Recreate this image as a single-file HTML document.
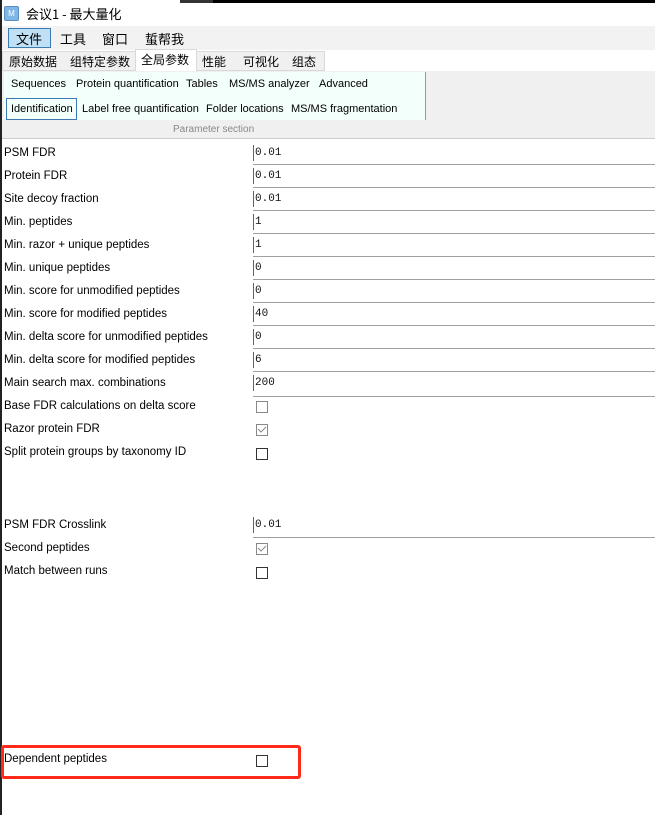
<!DOCTYPE html>
<html><head><meta charset="utf-8"><style>
*{margin:0;padding:0;box-sizing:border-box}
body{width:655px;height:815px;position:relative;background:#fff;font-family:"Liberation Sans","Noto Sans CJK SC",sans-serif;font-size:11px;color:#000;overflow:hidden}
.a{position:absolute;white-space:nowrap}
.cn{font-family:"Noto Sans CJK SC","Liberation Sans",sans-serif;font-size:13px}
.tb{font-family:"Noto Sans CJK SC","Liberation Sans",sans-serif;font-size:12px}
.lbl{position:absolute;left:4px;font-size:11.5px}
.fld{position:absolute;left:253px;width:402px;height:22px;border-top:1px solid #a0a0a0;font-family:"Liberation Mono",monospace;font-size:11px;padding:5px 0 0 2px;color:#111}
.fld:before{content:"";position:absolute;left:0;top:3px;width:1px;height:16px;background:#7a4a9a}
.cb{position:absolute;left:256px;width:12px;height:12px;border:1px solid #333;background:#fff}
.cb.g{border-color:#888}
</style></head><body>
<div class="a" style="left:180px;top:0;width:33px;height:3px;background:#333"></div>
<div class="a" style="left:213px;top:0;width:442px;height:3px;background:#000"></div>
<div class="a" style="left:4px;top:6px;width:15px;height:15px;background:#7fb6e6;border:1px solid #5a8fc4;border-radius:2px;color:#fff;font-size:8px;line-height:13px;text-align:center">M</div>
<div class="a cn" style="left:26px;top:4px">会议1 - 最大量化</div>
<div class="a" style="left:0;top:26px;width:655px;height:24px;background:#f2f2f2"></div>
<div class="a" style="left:8px;top:28px;width:43px;height:20px;background:#bfe0f5;border:1px solid #3d7ab4"></div>
<div class="a cn" style="left:16px;top:29px">文件</div>
<div class="a cn" style="left:60px;top:29px">工具</div>
<div class="a cn" style="left:102px;top:29px">窗口</div>
<div class="a cn" style="left:145px;top:29px">蜇帮我</div>
<div class="a" style="left:2px;top:51px;width:323px;height:20px;background:#f0f0f0;border:1px solid #d9d9d9"></div>
<div class="a" style="left:135px;top:49px;width:62px;height:23px;background:#fff;border:1px solid #d9d9d9;border-bottom:none"></div>
<div class="a tb" style="left:9px;top:53px">原始数据</div>
<div class="a tb" style="left:70px;top:53px">组特定参数</div>
<div class="a tb" style="left:141px;top:51px">全局参数</div>
<div class="a tb" style="left:202px;top:53px">性能</div>
<div class="a tb" style="left:243px;top:53px">可视化</div>
<div class="a tb" style="left:292px;top:53px">组态</div>
<div class="a" style="left:2px;top:71px;width:653px;height:68px;background:#f0f0f0;border-bottom:1px solid #ccc"></div>
<div class="a" style="left:4px;top:72px;width:422px;height:48px;background:#f3fffb;border-right:1px solid #999"></div>
<div class="a" style="left:11px;top:78px">Sequences</div>
<div class="a" style="left:76px;top:78px">Protein quantification</div>
<div class="a" style="left:186px;top:78px">Tables</div>
<div class="a" style="left:229px;top:78px">MS/MS analyzer</div>
<div class="a" style="left:319px;top:78px">Advanced</div>
<div class="a" style="left:6px;top:98px;width:71px;height:22px;border:1px solid #3d7ab4"></div>
<div class="a" style="left:11px;top:103px">Identification</div>
<div class="a" style="left:82px;top:103px">Label free quantification</div>
<div class="a" style="left:206px;top:103px">Folder locations</div>
<div class="a" style="left:291px;top:103px">MS/MS fragmentation</div>
<div class="a" style="left:173px;top:124px;font-size:10px;color:#888">Parameter section</div>
<div class="a" style="left:0;top:0;width:2px;height:815px;background:#222"></div>

<div class="lbl" style="top:147px">PSM FDR</div><div class="fld" style="top:141px;border-top-color:transparent">0.01</div>
<div class="lbl" style="top:170px">Protein FDR</div><div class="fld" style="top:164px">0.01</div>
<div class="lbl" style="top:193px">Site decoy fraction</div><div class="fld" style="top:187px">0.01</div>
<div class="lbl" style="top:216px">Min. peptides</div><div class="fld" style="top:210px">1</div>
<div class="lbl" style="top:239px">Min. razor + unique peptides</div><div class="fld" style="top:233px">1</div>
<div class="lbl" style="top:262px">Min. unique peptides</div><div class="fld" style="top:256px">0</div>
<div class="lbl" style="top:285px">Min. score for unmodified peptides</div><div class="fld" style="top:279px">0</div>
<div class="lbl" style="top:308px">Min. score for modified peptides</div><div class="fld" style="top:302px">40</div>
<div class="lbl" style="top:331px">Min. delta score for unmodified peptides</div><div class="fld" style="top:325px">0</div>
<div class="lbl" style="top:354px">Min. delta score for modified peptides</div><div class="fld" style="top:348px">6</div>
<div class="lbl" style="top:377px">Main search max. combinations</div><div class="fld" style="top:371px">200</div>
<div class="a" style="left:253px;top:396px;width:402px;height:1px;background:#a0a0a0"></div>
<div class="lbl" style="top:400px">Base FDR calculations on delta score</div><div class="cb g" style="top:401px"></div>
<div class="lbl" style="top:423px">Razor protein FDR</div><div class="cb g" style="top:424px"><svg width="10" height="10" style="position:absolute;left:0;top:0"><path d="M1 4 L4 7 L9 2" stroke="#888" fill="none"/></svg></div>
<div class="lbl" style="top:446px">Split protein groups by taxonomy ID</div><div class="cb" style="top:448px"></div>

<div class="lbl" style="top:519px">PSM FDR Crosslink</div><div class="fld" style="top:513px;border-top-color:transparent">0.01</div>
<div class="a" style="left:253px;top:537px;width:402px;height:1px;background:#a0a0a0"></div>
<div class="lbl" style="top:542px">Second peptides</div><div class="cb g" style="top:543px"><svg width="10" height="10" style="position:absolute;left:0;top:0"><path d="M1 4 L4 7 L9 2" stroke="#888" fill="none"/></svg></div>
<div class="lbl" style="top:565px">Match between runs</div><div class="cb" style="top:567px"></div>

<div class="lbl" style="top:753px">Dependent peptides</div><div class="cb" style="top:755px"></div>
<div class="a" style="left:1px;top:745px;width:300px;height:34px;border:3px solid #ff2a1a;border-radius:3px"></div>
</body></html>
